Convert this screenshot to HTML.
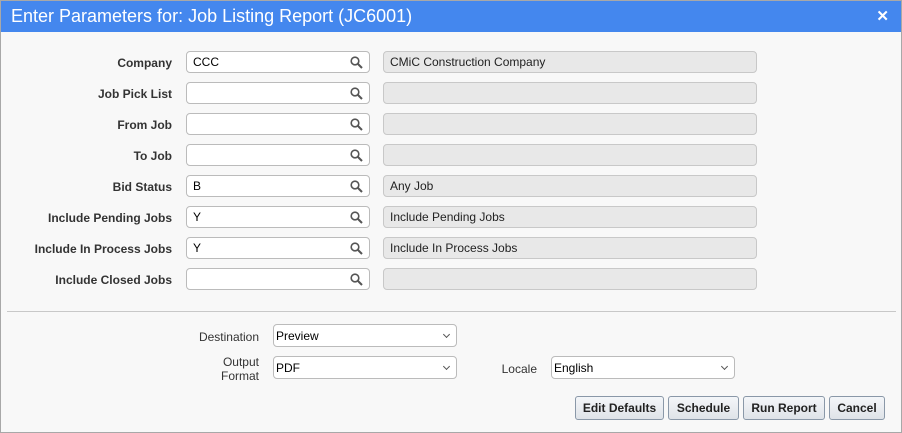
<!DOCTYPE html>
<html><head><style>
*{box-sizing:border-box;margin:0;padding:0}
body{width:902px;height:433px;overflow:hidden;font-family:"Liberation Sans",Arial,sans-serif;background:#f8f8f8}
.frame{position:absolute;left:0;top:0;width:902px;height:433px;border:1px solid #a8a8a8;background:#f8f8f8}
.title{position:absolute;left:0;top:0;width:900px;height:31px;background:#4487ee;color:#fff;font-size:18px;line-height:31px;padding-left:10px}
.x{position:absolute;right:12px;top:0;font-weight:bold;font-size:15px}
.lbl{position:absolute;width:172px;left:0;text-align:right;font-size:12px;font-weight:bold;color:#333}
.inp{position:absolute;left:186px;width:184px;height:22px;background:#fff;border:1px solid #bbb;border-radius:4px;font-size:12px;line-height:21px;padding-left:6px;color:#000}
.inp svg{position:absolute;right:6px;top:4px}
.ro{position:absolute;left:383px;width:374px;height:22px;background:#e8e8e8;border:1px solid #c8c8c8;border-radius:4px;font-size:12px;line-height:21px;padding-left:6px;color:#222}
.sep{position:absolute;left:7px;top:311px;width:889px;height:1px;background:#c8c8c8}
.sel{position:absolute;height:23px;background:#fff;border:1px solid #bbb;border-radius:4px;font-size:12px;line-height:22px;padding-left:2px}
.sel:after{content:"";position:absolute;right:7px;top:7px;width:4px;height:4px;border-right:1px solid #555;border-bottom:1px solid #555;transform:rotate(45deg)}
.l2{position:absolute;font-size:12px;color:#333;text-align:right}
.btn{position:absolute;top:396px;height:24px;background:linear-gradient(#f4f6f9,#dfe3e8);border:1px solid #8a98a8;border-radius:3px;font-size:12px;font-weight:bold;color:#222;text-align:center;line-height:23px}
</style></head><body><div class="frame">
<div class="title">Enter Parameters for: Job Listing Report (JC6001)<span class="x">✕</span></div>
</div>
<div class="lbl" style="top:56px">Company</div><div class="inp" style="top:51px">CCC<svg width="13" height="13"><circle cx="5" cy="5" r="3.8" fill="none" stroke="#555" stroke-width="1.6"/><line x1="8" y1="8" x2="12" y2="12" stroke="#555" stroke-width="2"/></svg></div><div class="ro" style="top:51px">CMiC Construction Company</div>
<div class="lbl" style="top:87px">Job Pick List</div><div class="inp" style="top:82px"><svg width="13" height="13"><circle cx="5" cy="5" r="3.8" fill="none" stroke="#555" stroke-width="1.6"/><line x1="8" y1="8" x2="12" y2="12" stroke="#555" stroke-width="2"/></svg></div><div class="ro" style="top:82px"></div>
<div class="lbl" style="top:118px">From Job</div><div class="inp" style="top:113px"><svg width="13" height="13"><circle cx="5" cy="5" r="3.8" fill="none" stroke="#555" stroke-width="1.6"/><line x1="8" y1="8" x2="12" y2="12" stroke="#555" stroke-width="2"/></svg></div><div class="ro" style="top:113px"></div>
<div class="lbl" style="top:149px">To Job</div><div class="inp" style="top:144px"><svg width="13" height="13"><circle cx="5" cy="5" r="3.8" fill="none" stroke="#555" stroke-width="1.6"/><line x1="8" y1="8" x2="12" y2="12" stroke="#555" stroke-width="2"/></svg></div><div class="ro" style="top:144px"></div>
<div class="lbl" style="top:180px">Bid Status</div><div class="inp" style="top:175px">B<svg width="13" height="13"><circle cx="5" cy="5" r="3.8" fill="none" stroke="#555" stroke-width="1.6"/><line x1="8" y1="8" x2="12" y2="12" stroke="#555" stroke-width="2"/></svg></div><div class="ro" style="top:175px">Any Job</div>
<div class="lbl" style="top:211px">Include Pending Jobs</div><div class="inp" style="top:206px">Y<svg width="13" height="13"><circle cx="5" cy="5" r="3.8" fill="none" stroke="#555" stroke-width="1.6"/><line x1="8" y1="8" x2="12" y2="12" stroke="#555" stroke-width="2"/></svg></div><div class="ro" style="top:206px">Include Pending Jobs</div>
<div class="lbl" style="top:242px">Include In Process Jobs</div><div class="inp" style="top:237px">Y<svg width="13" height="13"><circle cx="5" cy="5" r="3.8" fill="none" stroke="#555" stroke-width="1.6"/><line x1="8" y1="8" x2="12" y2="12" stroke="#555" stroke-width="2"/></svg></div><div class="ro" style="top:237px">Include In Process Jobs</div>
<div class="lbl" style="top:273px">Include Closed Jobs</div><div class="inp" style="top:268px"><svg width="13" height="13"><circle cx="5" cy="5" r="3.8" fill="none" stroke="#555" stroke-width="1.6"/><line x1="8" y1="8" x2="12" y2="12" stroke="#555" stroke-width="2"/></svg></div><div class="ro" style="top:268px"></div>
<div class="sep"></div>
<div class="l2" style="left:190px;width:69px;top:330px">Destination</div>
<div class="sel" style="left:273px;top:324px;width:184px">Preview</div>
<div class="l2" style="left:190px;width:69px;top:355px;line-height:14px">Output<br>Format</div>
<div class="sel" style="left:273px;top:356px;width:184px">PDF</div>
<div class="l2" style="left:480px;width:57px;top:362px">Locale</div>
<div class="sel" style="left:551px;top:356px;width:184px">English</div>
<div class="btn" style="left:575px;width:89px">Edit Defaults</div>
<div class="btn" style="left:668px;width:71px">Schedule</div>
<div class="btn" style="left:743px;width:82px">Run Report</div>
<div class="btn" style="left:829px;width:56px">Cancel</div>
</body></html>
